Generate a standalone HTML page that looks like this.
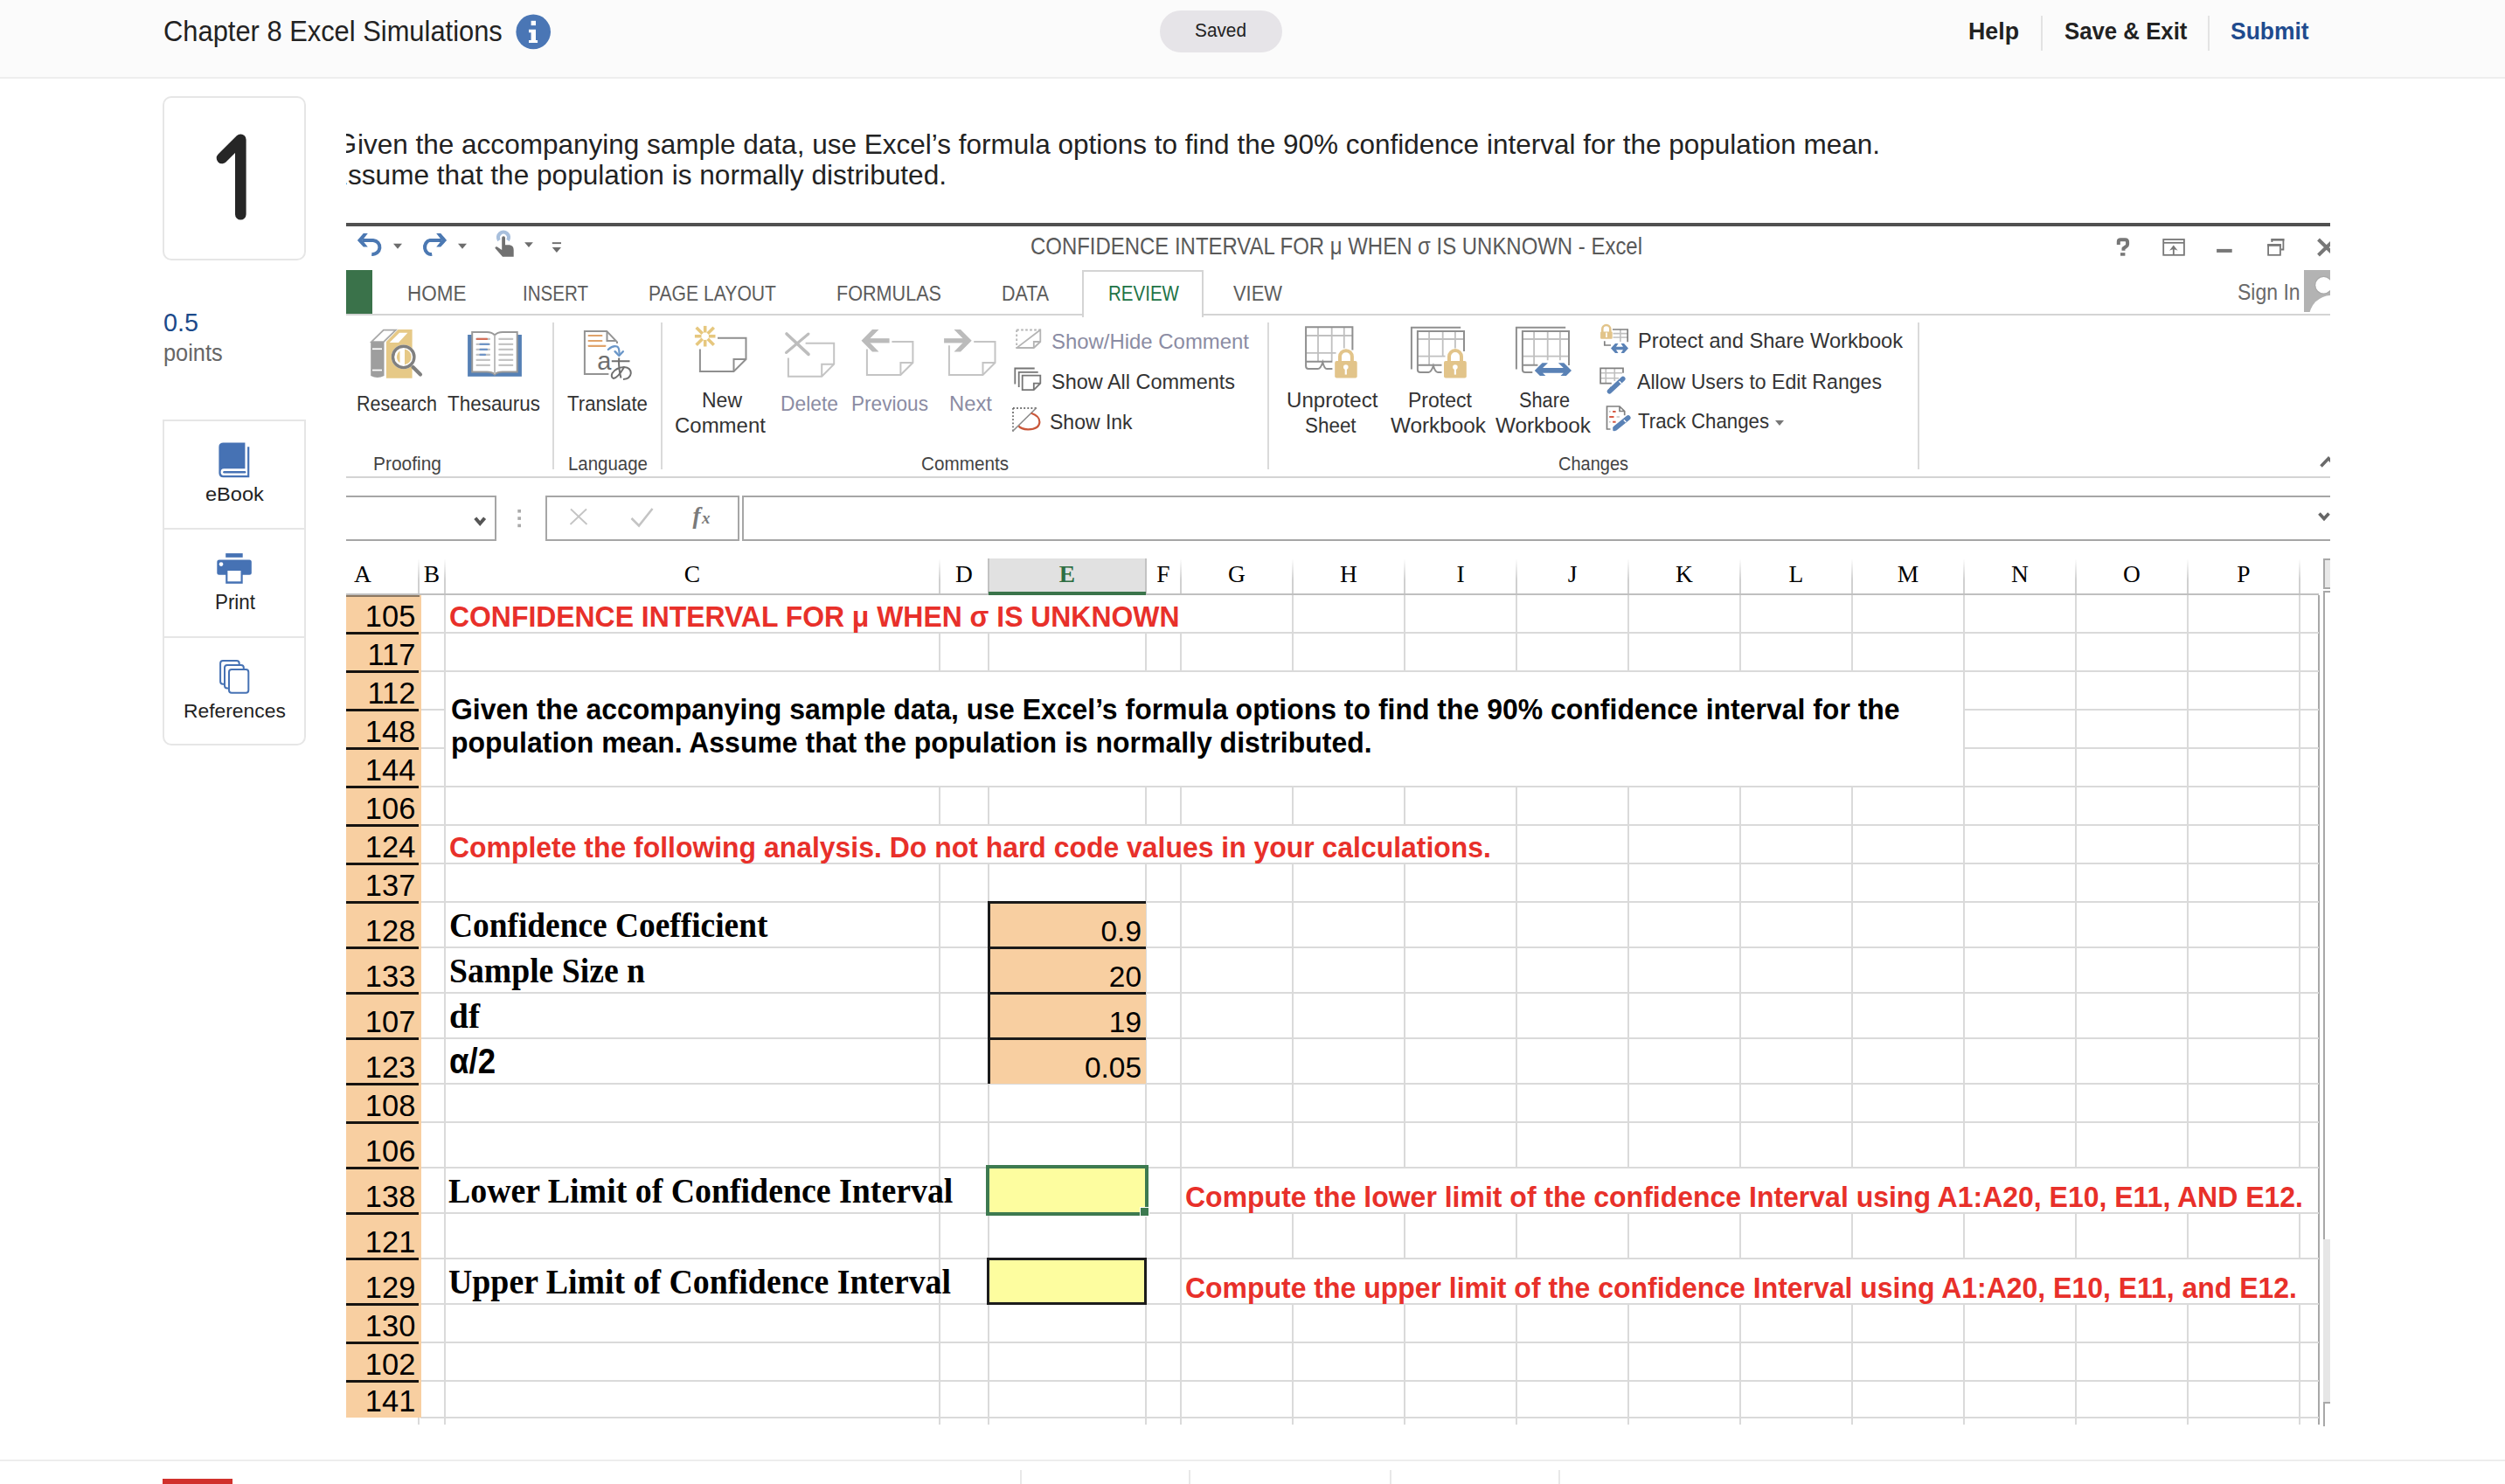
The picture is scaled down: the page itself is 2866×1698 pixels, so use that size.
<!DOCTYPE html><html><head><meta charset="utf-8"><style>
html,body{margin:0;padding:0;width:2866px;height:1698px;overflow:hidden;background:#fff;}
body{position:relative;font-family:"Liberation Sans",sans-serif;}
div,svg,span.t{position:absolute;}
span.t{white-space:nowrap;transform-origin:0 0;}
</style></head><body>
<div style="left:0px;top:0px;width:2866px;height:88px;background:#fbfbfb;"></div>
<div style="left:0px;top:88px;width:2866px;height:2px;background:#eeeeee;"></div>
<svg style="left:590px;top:16px" width="41" height="41" viewBox="590 16 41 41"><circle cx="610.2" cy="36.4" r="19.8" fill="#4a76b5"/><rect x="607.6" y="23.8" width="5.4" height="5.3" fill="#fff"/><path d="M605 33.8 H613 V46 H615.1 V48.9 H605 V46 H607.6 V37.3 H605 Z" fill="#fff"/></svg>
<div style="left:1327px;top:12px;width:140px;height:48px;border-radius:24px;background:#e6e4e8"></div>
<div style="left:2335px;top:18px;width:2px;height:40px;background:#e3e3e3;"></div>
<div style="left:2526px;top:18px;width:2px;height:40px;background:#e3e3e3;"></div>
<div style="left:186px;top:110px;width:160px;height:184px;border:2px solid #e6e6e6;border-radius:10px;background:#fff"></div>
<svg style="left:230px;top:140px" width="70" height="130" viewBox="230 140 70 130"><path d="M254 181 L275.3 159.8 L275.3 245.3" fill="none" stroke="#262626" stroke-width="12.6" stroke-linecap="round" stroke-linejoin="round"/></svg>
<div style="left:186px;top:480px;width:160px;height:369px;border:2px solid #e6e6e6;border-radius:0 0 10px 10px;background:#fff"></div>
<div style="left:188px;top:604px;width:160px;height:2px;background:#e6e6e6;"></div>
<div style="left:188px;top:728px;width:160px;height:2px;background:#e6e6e6;"></div>
<div style="left:396px;top:140px;width:1900px;height:90px;overflow:hidden"><span class="t" style="left:-12px;top:9.35px;font:400 31px/1 'Liberation Sans',sans-serif;color:#222">G</span></div>
<div style="left:396px;top:175px;width:100px;height:50px;overflow:hidden"><span class="t" style="left:-20px;top:9.55px;font:400 31px/1 'Liberation Sans',sans-serif;color:#222">A</span></div>
<div style="left:396px;top:255px;width:2270px;height:4px;background:#505050;"></div>
<div style="left:396px;top:309px;width:30px;height:50px;background:#3a724a;"></div>
<div style="left:396px;top:359px;width:2270px;height:2px;background:#d4d4d4;"></div>
<div style="left:1238px;top:309px;width:135px;height:52px;border:2px solid #d4d4d4;border-bottom:none;background:#fff"></div>
<div style="left:2636px;top:309px;width:30px;height:48px;background:#b3b3b3;"></div>
<svg style="left:2636px;top:309px" width="30" height="48"><circle cx="30" cy="23" r="11" fill="#fff" stroke="#b3b3b3" stroke-width="0"/><path d="M6 48 v-16 a12 12 0 0 1 12 -12 h12 v28z" fill="#b3b3b3"/></svg>
<svg style="left:2031px;top:481px" width="10" height="6"><path d="M0 0h10l-5 6z" fill="#777"/></svg>
<div style="left:632px;top:369px;width:2px;height:168px;background:#dadada;"></div>
<div style="left:756px;top:369px;width:2px;height:168px;background:#dadada;"></div>
<div style="left:1450px;top:369px;width:2px;height:168px;background:#dadada;"></div>
<div style="left:2194px;top:369px;width:2px;height:168px;background:#dadada;"></div>
<div style="left:396px;top:545px;width:2270px;height:2px;background:#d4d4d4;"></div>
<div style="left:396px;top:567px;width:170px;height:48px;border:2px solid #a6a6a6;border-left:none"></div>
<div style="left:624px;top:567px;width:218px;height:48px;border:2px solid #a6a6a6"></div>
<div style="left:849px;top:567px;width:1830px;height:48px;border:2px solid #a6a6a6;border-right:none"></div>
<div style="left:1131px;top:639px;width:180px;height:41px;background:#e1e1e1;"></div>
<div style="left:478px;top:639px;width:2px;height:41px;background:linear-gradient(#fff,#d0d0d0 60%)"></div>
<div style="left:508px;top:639px;width:2px;height:41px;background:linear-gradient(#fff,#d0d0d0 60%)"></div>
<div style="left:1074px;top:639px;width:2px;height:41px;background:linear-gradient(#fff,#d0d0d0 60%)"></div>
<div style="left:1130px;top:639px;width:2px;height:41px;background:linear-gradient(#fff,#d0d0d0 60%)"></div>
<div style="left:1310px;top:639px;width:2px;height:41px;background:linear-gradient(#fff,#d0d0d0 60%)"></div>
<div style="left:1350px;top:639px;width:2px;height:41px;background:linear-gradient(#fff,#d0d0d0 60%)"></div>
<div style="left:1478px;top:639px;width:2px;height:41px;background:linear-gradient(#fff,#d0d0d0 60%)"></div>
<div style="left:1606px;top:639px;width:2px;height:41px;background:linear-gradient(#fff,#d0d0d0 60%)"></div>
<div style="left:1734px;top:639px;width:2px;height:41px;background:linear-gradient(#fff,#d0d0d0 60%)"></div>
<div style="left:1862px;top:639px;width:2px;height:41px;background:linear-gradient(#fff,#d0d0d0 60%)"></div>
<div style="left:1990px;top:639px;width:2px;height:41px;background:linear-gradient(#fff,#d0d0d0 60%)"></div>
<div style="left:2118px;top:639px;width:2px;height:41px;background:linear-gradient(#fff,#d0d0d0 60%)"></div>
<div style="left:2246px;top:639px;width:2px;height:41px;background:linear-gradient(#fff,#d0d0d0 60%)"></div>
<div style="left:2374px;top:639px;width:2px;height:41px;background:linear-gradient(#fff,#d0d0d0 60%)"></div>
<div style="left:2502px;top:639px;width:2px;height:41px;background:linear-gradient(#fff,#d0d0d0 60%)"></div>
<div style="left:2630px;top:639px;width:2px;height:41px;background:linear-gradient(#fff,#d0d0d0 60%)"></div>
<div style="left:396px;top:678.6px;width:2257px;height:2.3999999999999773px;background:#c0c0c0;"></div>
<div style="left:1130px;top:639px;width:2px;height:41px;background:#c2c2c2;"></div>
<div style="left:1310px;top:639px;width:2px;height:41px;background:#c2c2c2;"></div>
<div style="left:1131px;top:677px;width:180px;height:3.5px;background:#3a744a;"></div>
<div style="left:508px;top:681px;width:2px;height:949px;background:#dadada;"></div>
<div style="left:1074px;top:724px;width:2px;height:44px;background:#dadada;"></div>
<div style="left:1074px;top:900px;width:2px;height:44px;background:#dadada;"></div>
<div style="left:1074px;top:988px;width:2px;height:642px;background:#dadada;"></div>
<div style="left:1130px;top:724px;width:2px;height:44px;background:#dadada;"></div>
<div style="left:1130px;top:900px;width:2px;height:44px;background:#dadada;"></div>
<div style="left:1130px;top:988px;width:2px;height:642px;background:#dadada;"></div>
<div style="left:1310px;top:724px;width:2px;height:44px;background:#dadada;"></div>
<div style="left:1310px;top:900px;width:2px;height:44px;background:#dadada;"></div>
<div style="left:1310px;top:988px;width:2px;height:642px;background:#dadada;"></div>
<div style="left:1350px;top:724px;width:2px;height:44px;background:#dadada;"></div>
<div style="left:1350px;top:900px;width:2px;height:44px;background:#dadada;"></div>
<div style="left:1350px;top:988px;width:2px;height:642px;background:#dadada;"></div>
<div style="left:1478px;top:681px;width:2px;height:87px;background:#dadada;"></div>
<div style="left:1478px;top:900px;width:2px;height:44px;background:#dadada;"></div>
<div style="left:1478px;top:988px;width:2px;height:348px;background:#dadada;"></div>
<div style="left:1478px;top:1388px;width:2px;height:52px;background:#dadada;"></div>
<div style="left:1478px;top:1492px;width:2px;height:138px;background:#dadada;"></div>
<div style="left:1606px;top:681px;width:2px;height:87px;background:#dadada;"></div>
<div style="left:1606px;top:900px;width:2px;height:44px;background:#dadada;"></div>
<div style="left:1606px;top:988px;width:2px;height:348px;background:#dadada;"></div>
<div style="left:1606px;top:1388px;width:2px;height:52px;background:#dadada;"></div>
<div style="left:1606px;top:1492px;width:2px;height:138px;background:#dadada;"></div>
<div style="left:1734px;top:681px;width:2px;height:87px;background:#dadada;"></div>
<div style="left:1734px;top:900px;width:2px;height:436px;background:#dadada;"></div>
<div style="left:1734px;top:1388px;width:2px;height:52px;background:#dadada;"></div>
<div style="left:1734px;top:1492px;width:2px;height:138px;background:#dadada;"></div>
<div style="left:1862px;top:681px;width:2px;height:87px;background:#dadada;"></div>
<div style="left:1862px;top:900px;width:2px;height:436px;background:#dadada;"></div>
<div style="left:1862px;top:1388px;width:2px;height:52px;background:#dadada;"></div>
<div style="left:1862px;top:1492px;width:2px;height:138px;background:#dadada;"></div>
<div style="left:1990px;top:681px;width:2px;height:87px;background:#dadada;"></div>
<div style="left:1990px;top:900px;width:2px;height:436px;background:#dadada;"></div>
<div style="left:1990px;top:1388px;width:2px;height:52px;background:#dadada;"></div>
<div style="left:1990px;top:1492px;width:2px;height:138px;background:#dadada;"></div>
<div style="left:2118px;top:681px;width:2px;height:87px;background:#dadada;"></div>
<div style="left:2118px;top:900px;width:2px;height:436px;background:#dadada;"></div>
<div style="left:2118px;top:1388px;width:2px;height:52px;background:#dadada;"></div>
<div style="left:2118px;top:1492px;width:2px;height:138px;background:#dadada;"></div>
<div style="left:2246px;top:681px;width:2px;height:655px;background:#dadada;"></div>
<div style="left:2246px;top:1388px;width:2px;height:52px;background:#dadada;"></div>
<div style="left:2246px;top:1492px;width:2px;height:138px;background:#dadada;"></div>
<div style="left:2374px;top:681px;width:2px;height:655px;background:#dadada;"></div>
<div style="left:2374px;top:1388px;width:2px;height:52px;background:#dadada;"></div>
<div style="left:2374px;top:1492px;width:2px;height:138px;background:#dadada;"></div>
<div style="left:2502px;top:681px;width:2px;height:655px;background:#dadada;"></div>
<div style="left:2502px;top:1388px;width:2px;height:52px;background:#dadada;"></div>
<div style="left:2502px;top:1492px;width:2px;height:138px;background:#dadada;"></div>
<div style="left:2630px;top:681px;width:2px;height:655px;background:#dadada;"></div>
<div style="left:2630px;top:1388px;width:2px;height:52px;background:#dadada;"></div>
<div style="left:2630px;top:1492px;width:2px;height:138px;background:#dadada;"></div>
<div style="left:2652px;top:681px;width:2px;height:949px;background:#a8a8a8;"></div>
<div style="left:478px;top:1622px;width:2px;height:8px;background:#dadada;"></div>
<div style="left:481px;top:723px;width:2172px;height:2px;background:#dadada;"></div>
<div style="left:481px;top:767px;width:2172px;height:2px;background:#dadada;"></div>
<div style="left:481px;top:811px;width:28px;height:2px;background:#dadada;"></div>
<div style="left:2247px;top:811px;width:406px;height:2px;background:#dadada;"></div>
<div style="left:481px;top:855px;width:28px;height:2px;background:#dadada;"></div>
<div style="left:2247px;top:855px;width:406px;height:2px;background:#dadada;"></div>
<div style="left:481px;top:899px;width:2172px;height:2px;background:#dadada;"></div>
<div style="left:481px;top:943px;width:2172px;height:2px;background:#dadada;"></div>
<div style="left:481px;top:987px;width:2172px;height:2px;background:#dadada;"></div>
<div style="left:481px;top:1031px;width:2172px;height:2px;background:#dadada;"></div>
<div style="left:481px;top:1083px;width:2172px;height:2px;background:#dadada;"></div>
<div style="left:481px;top:1135px;width:2172px;height:2px;background:#dadada;"></div>
<div style="left:481px;top:1187px;width:2172px;height:2px;background:#dadada;"></div>
<div style="left:481px;top:1239px;width:2172px;height:2px;background:#dadada;"></div>
<div style="left:481px;top:1283px;width:2172px;height:2px;background:#dadada;"></div>
<div style="left:481px;top:1335px;width:2172px;height:2px;background:#dadada;"></div>
<div style="left:481px;top:1387px;width:2172px;height:2px;background:#dadada;"></div>
<div style="left:481px;top:1439px;width:2172px;height:2px;background:#dadada;"></div>
<div style="left:481px;top:1491px;width:2172px;height:2px;background:#dadada;"></div>
<div style="left:481px;top:1535px;width:2172px;height:2px;background:#dadada;"></div>
<div style="left:481px;top:1579px;width:2172px;height:2px;background:#dadada;"></div>
<div style="left:481px;top:1621px;width:2172px;height:2px;background:#dadada;"></div>
<div style="left:396px;top:681px;width:86px;height:941px;background:#f8cfa1;"></div>
<div style="left:396px;top:680.8px;width:84px;height:2.2000000000000455px;background:#8c7862;"></div>
<div style="left:396px;top:722.5px;width:83px;height:3.5px;background:#161310;"></div>
<div style="left:396px;top:766.5px;width:83px;height:3.5px;background:#161310;"></div>
<div style="left:396px;top:810.5px;width:83px;height:3.5px;background:#161310;"></div>
<div style="left:396px;top:854.5px;width:83px;height:3.5px;background:#161310;"></div>
<div style="left:396px;top:898.5px;width:83px;height:3.5px;background:#161310;"></div>
<div style="left:396px;top:942.5px;width:83px;height:3.5px;background:#161310;"></div>
<div style="left:396px;top:986.5px;width:83px;height:3.5px;background:#161310;"></div>
<div style="left:396px;top:1030.5px;width:83px;height:3.5px;background:#161310;"></div>
<div style="left:396px;top:1082.5px;width:83px;height:3.5px;background:#161310;"></div>
<div style="left:396px;top:1134.5px;width:83px;height:3.5px;background:#161310;"></div>
<div style="left:396px;top:1186.5px;width:83px;height:3.5px;background:#161310;"></div>
<div style="left:396px;top:1238.5px;width:83px;height:3.5px;background:#161310;"></div>
<div style="left:396px;top:1282.5px;width:83px;height:3.5px;background:#161310;"></div>
<div style="left:396px;top:1334.5px;width:83px;height:3.5px;background:#161310;"></div>
<div style="left:396px;top:1386.5px;width:83px;height:3.5px;background:#161310;"></div>
<div style="left:396px;top:1438.5px;width:83px;height:3.5px;background:#161310;"></div>
<div style="left:396px;top:1490.5px;width:83px;height:3.5px;background:#161310;"></div>
<div style="left:396px;top:1534.5px;width:83px;height:3.5px;background:#161310;"></div>
<div style="left:396px;top:1578.5px;width:83px;height:3.5px;background:#161310;"></div>
<div style="left:1131px;top:1032px;width:180px;height:208px;background:#f8cfa1;"></div>
<div style="left:1130px;top:1031px;width:3px;height:209px;background:#1a1a1a;"></div>
<div style="left:1130px;top:1031px;width:181px;height:3px;background:#1a1a1a;"></div>
<div style="left:1130px;top:1083px;width:181px;height:3px;background:#1a1a1a;"></div>
<div style="left:1130px;top:1135px;width:181px;height:3px;background:#1a1a1a;"></div>
<div style="left:1130px;top:1187px;width:181px;height:3px;background:#1a1a1a;"></div>
<div style="left:1128px;top:1333px;width:178px;height:50px;border:4px solid #3d7a50;background:#fdfd9f"></div>
<div style="left:1304px;top:1381px;width:9px;height:9px;background:#3d7a50;border:1px solid #fff"></div>
<div style="left:1129px;top:1439px;width:177px;height:48px;border:3px solid #1c1c1c;background:#fdfd9f"></div>
<div style="left:2658px;top:639px;width:10px;height:31px;border:2px solid #a8a8a8;border-right:none;background:#e8e8e8"></div>
<div style="left:2658px;top:676px;width:10px;height:740px;border:2px solid #a8a8a8;border-right:none;background:#fff"></div>
<div style="left:2658px;top:1418px;width:8px;height:186px;background:#e6e6e6;"></div>
<div style="left:2658px;top:1604px;width:10px;height:26px;border:2px solid #a8a8a8;border-right:none;border-bottom:none;background:#fff"></div>
<div style="left:2666px;top:250px;width:200px;height:1410px;background:#fff;"></div>
<div style="left:0px;top:1670px;width:2866px;height:2px;background:#ededed;"></div>
<div style="left:186px;top:1692px;width:80px;height:6px;background:#d1312c;"></div>
<div style="left:1167px;top:1682px;width:2px;height:16px;background:#e8e8e8;"></div>
<div style="left:1360px;top:1682px;width:2px;height:16px;background:#e8e8e8;"></div>
<div style="left:1590px;top:1682px;width:2px;height:16px;background:#e8e8e8;"></div>
<div style="left:1783px;top:1682px;width:2px;height:16px;background:#e8e8e8;"></div>
<svg style="left:245px;top:500px;" width="45" height="50" viewBox="245 500 45 50"><path d="M250.4 511.4 Q250.4 506.4 255.4 506.4 H280.4 V536.2 H256 Q252.6 536.2 252.6 540.1 Q252.6 544 256 544 H283.1 V511.3 H285.3 V546.2 H255.4 Q250.4 546.2 250.4 541.2 Z" fill="#4672b4"/><path d="M256.5 540.3 H280" stroke="#4672b4" stroke-width="2.6" stroke-linecap="round"/></svg>
<svg style="left:245px;top:628px;" width="48" height="45" viewBox="245 628 48 45"><rect x="258.2" y="633.1" width="19.5" height="4.7" fill="#4672b4"/><rect x="248.3" y="640.5" width="39.5" height="17.2" rx="2.5" fill="#4672b4"/><circle cx="253" cy="645.6" r="2.3" fill="#fff"/><rect x="258.2" y="651" width="19.5" height="16.8" fill="#4672b4"/><rect x="260.4" y="653" width="15.1" height="12.3" fill="#fff"/></svg>
<svg style="left:245px;top:750px;" width="45" height="48" viewBox="245 750 45 48"><rect x="252.1" y="755.9" width="21.599999999999994" height="26.800000000000068" rx="3" fill="#fff" stroke="#4672b4" stroke-width="2"/><rect x="257" y="761" width="21.80000000000001" height="26.600000000000023" rx="3" fill="#fff" stroke="#4672b4" stroke-width="2"/><rect x="262" y="766" width="22.30000000000001" height="26.799999999999955" rx="3" fill="#fff" stroke="#4672b4" stroke-width="2"/></svg>
<svg style="left:400px;top:258px;" width="260" height="42" viewBox="400 258 260 42"><path d="M415 274.9 H427 A8 8 0 1 1 425.3 290.8" fill="none" stroke="#4b78b2" stroke-width="4"/><path d="M408.9 274.9 L415.8 266.9 H420.8 L414.6 274.9 L420.8 282.6 H415.8 Z" fill="#4b78b2"/><path d="M450 278.7 h10 l-5 6z" fill="#6d6d6d"/><path d="M505 274.9 H492 A7 8 0 0 0 494.2 290.9" fill="none" stroke="#4b78b2" stroke-width="4"/><path d="M511.1 274.9 L504.2 266.9 H499.2 L505.4 274.9 L499.2 282.6 H504.2 Z" fill="#4b78b2"/><path d="M524 278.7 h10 l-5 6z" fill="#6d6d6d"/><path d="M571 275 A6 6 0 1 1 581 275" fill="none" stroke="#a8bfdc" stroke-width="4.2"/><path d="M574.2 272 Q574.2 270.2 576.1 270.2 Q578 270.2 578 272 V280.2 H583 Q587.7 281 587.7 286 V293.7 H575 L566.5 284 Q566 282 568.5 282.2 L574.2 286 Z" fill="#717171"/><path d="M600.1 277.2 h9.8 l-4.9 5.8z" fill="#6d6d6d"/><rect x="631.8" y="277.2" width="10.2" height="1.9" fill="#6d6d6d"/><path d="M631.8 283 h10.2 l-5.1 6z" fill="#6d6d6d"/></svg>
<svg style="left:2415px;top:268px;" width="251" height="30" viewBox="2415 268 251 30"><path d="M2423.8 280 v-3.5 q0 -2.2 2.5 -2.2 h5 q2.8 0 2.8 2.8 v2.4 q0 1.8 -1.8 2.8 l-2.8 1.8 v2.6" fill="none" stroke="#777" stroke-width="4" stroke-linejoin="round"/><rect x="2426" y="289.2" width="5.4" height="3.5" fill="#777"/><rect x="2475.2" y="274" width="23.7" height="17.8" fill="none" stroke="#777" stroke-width="1.8"/><path d="M2475 277.8 H2499" stroke="#777" stroke-width="1.8"/><path d="M2486.8 292 V283" fill="none" stroke="#777" stroke-width="1.8"/><path d="M2482 286.8 L2486.8 280.5 L2491.6 286.8 Q2486.8 283.5 2482 286.8 Z" fill="#777"/><rect x="2536.1" y="284.9" width="17.6" height="4" fill="#777"/><path d="M2599.4 277 V274.2 H2612.4 V285.5 H2609.8" fill="none" stroke="#777" stroke-width="1.8"/><rect x="2598.4" y="273" width="15" height="2.6" fill="#777"/><rect x="2595.1" y="280.1" width="13.8" height="11.7" fill="none" stroke="#777" stroke-width="1.8"/><rect x="2594.2" y="279.2" width="15.6" height="2.6" fill="#777"/><path d="M2652.5 274 L2671 292 M2652.5 292 L2671 274" stroke="#777" stroke-width="4"/></svg>
<svg style="left:2636px;top:309px;" width="30" height="48" viewBox="2636 309 30 48"><rect x="2636" y="309" width="30" height="48" fill="#b3b3b3"/><circle cx="2658.5" cy="326.3" r="10.5" fill="#a9a9a9"/><circle cx="2658.5" cy="326.3" r="9.2" fill="#fff"/><circle cx="2667" cy="363" r="25" fill="#fff"/></svg>
<svg style="left:420px;top:372px;" width="66" height="64" viewBox="420 372 66 64"><path d="M425 391.2 L438.8 377.6 H452.8 L439 391.2 Z" fill="#fff" stroke="#a8a8a8" stroke-width="1.8"/><path d="M424.2 391.2 H439.5 V430 Q431.8 434 424.2 430 Z" fill="#9e9e9e"/><rect x="426" y="398.4" width="11" height="1.7" fill="#fff"/><rect x="426" y="422.7" width="11" height="1.7" fill="#fff"/><path d="M441.9 391 L455.5 377 H471.6 V432.7 H441.9 Z" fill="#e6c987"/><path d="M445.7 392 L457 380.8 H466.4 L456 392 Z" fill="#fff"/><path d="M472.5 420 L481 428.6" stroke="#7f7f7f" stroke-width="4.2" stroke-linecap="round"/><circle cx="461.7" cy="408.4" r="12.4" fill="#fff" stroke="#fff" stroke-width="3"/><circle cx="461.7" cy="408.4" r="12.2" fill="#fff" stroke="#808080" stroke-width="3.4"/><path d="M463 399.5 A9 9 0 0 1 463 417.3 Z" fill="#e6c987"/><path d="M457.5 401.5 A8.5 8.5 0 0 0 457.5 415.3 Z" fill="#e6c987"/></svg>
<svg style="left:530px;top:375px;" width="70" height="60" viewBox="530 375 70 60"><rect x="535.1" y="383" width="61.8" height="47.8" fill="#5580b5"/><path d="M540.2 380 H557 Q563 380 566 383.5 Q569 380 575 380 H591.7 V425.6 H575 Q569 425.6 566 428.5 Q563 425.6 557 425.6 H540.2 Z" fill="#fff" stroke="#999" stroke-width="2"/><path d="M566 383.5 V428" stroke="#bdbdbd" stroke-width="2"/><path d="M545.5 387.9 H560 M571.3 387.9 H586.3" stroke="#c4c4c4" stroke-width="2.1" stroke-linecap="round"/><path d="M545.5 393.9 H560 M571.3 393.9 H586.3" stroke="#c4c4c4" stroke-width="2.1" stroke-linecap="round"/><path d="M545.5 399.9 H560 M571.3 399.9 H586.3" stroke="#c4c4c4" stroke-width="2.1" stroke-linecap="round"/><path d="M545.5 405.9 H560 M571.3 405.9 H586.3" stroke="#c4c4c4" stroke-width="2.1" stroke-linecap="round"/><path d="M545.5 411.9 H560 M571.3 411.9 H586.3" stroke="#c4c4c4" stroke-width="2.1" stroke-linecap="round"/><path d="M545.5 417.9 H560 M571.3 417.9 H586.3" stroke="#c4c4c4" stroke-width="2.1" stroke-linecap="round"/><path d="M545.6 387.9 H557" stroke="#d4705a" stroke-width="2.1" stroke-linecap="round"/><path d="M549.4 393.9 H559" stroke="#6f94c6" stroke-width="2.1" stroke-linecap="round"/><path d="M549.4 399.9 H557" stroke="#6f94c6" stroke-width="2.1" stroke-linecap="round"/><path d="M549.4 405.9 H555" stroke="#6f94c6" stroke-width="2.1" stroke-linecap="round"/></svg>
<svg style="left:660px;top:372px;" width="70" height="66" viewBox="660 372 70 66"><path d="M696.4 427.9 H668.9 V378.9 H694.2 L706 391.3 V393" fill="none" stroke="#939393" stroke-width="2"/><path d="M694.5 379 V390 H704" fill="none" stroke="#939393" stroke-width="2"/><path d="M673.6 384 H688.4 M673.6 390 H688.4 M673.6 395.8 H692.4" stroke="#e0a36b" stroke-width="2.2" stroke-linecap="round"/><path d="M695.8 400 Q701 395 706 396.5 Q708.5 397.5 708.5 404" fill="none" stroke="#6a96c8" stroke-width="2.2" stroke-linecap="round"/><path d="M703.6 402.2 L708.3 407 L712.8 402.2" fill="none" stroke="#6a96c8" stroke-width="2.4" stroke-linecap="round" stroke-linejoin="round"/><text x="683.3" y="423.3" font-family="Liberation Sans" font-size="29" fill="#6e6e6e">a</text><path d="M699.8 413.3 H720.5 M708.2 409.5 Q707.5 422 710.5 432.5 M713.5 421 Q707 432 702 433 Q698.5 431.5 700.5 427 Q705 420.5 714 420 Q721.6 420.5 721.8 427 Q721.2 433.5 713 434" fill="none" stroke="#707070" stroke-width="2"/></svg>
<svg style="left:790px;top:370px;" width="70" height="62" viewBox="790 370 70 62"><path d="M810.90 384.70 L818.50 384.70" stroke="#e6c77e" stroke-width="3.6"/><path d="M809.67 387.67 L816.74 394.74" stroke="#e6c77e" stroke-width="3.6"/><path d="M806.70 388.90 L806.70 396.50" stroke="#e6c77e" stroke-width="3.6"/><path d="M803.73 387.67 L796.66 394.74" stroke="#e6c77e" stroke-width="3.6"/><path d="M802.50 384.70 L794.90 384.70" stroke="#e6c77e" stroke-width="3.6"/><path d="M803.73 381.73 L796.66 374.66" stroke="#e6c77e" stroke-width="3.6"/><path d="M806.70 380.50 L806.70 372.90" stroke="#e6c77e" stroke-width="3.6"/><path d="M809.67 381.73 L816.74 374.66" stroke="#e6c77e" stroke-width="3.6"/><path d="M821 386.7 H853.5 V411 L839.5 425 H800.9 V399.4" fill="none" stroke="#8f8f8f" stroke-width="2"/><path d="M839.5 425 V411 H853.5" fill="none" stroke="#8f8f8f" stroke-width="2"/></svg>
<svg style="left:893px;top:375px;" width="67" height="60" viewBox="893 375 67 60"><path d="M900 382 L925 405.4" stroke="#bdbdbd" stroke-width="3.6" stroke-linecap="round"/><path d="M899.5 403.5 L925 382" stroke="#bdbdbd" stroke-width="3" stroke-linecap="round"/><path d="M921.6 392.8 H954.2 V416.7 L940.2 430.7 H901.9 V409.5" fill="none" stroke="#c4c4c4" stroke-width="2"/><path d="M940.2 430.7 V416.7 H954.2" fill="none" stroke="#c4c4c4" stroke-width="2"/></svg>
<svg style="left:983px;top:372px;" width="67" height="62" viewBox="983 372 67 62"><path d="M990 389.8 H1017.6" stroke="#bbb" stroke-width="5.3"/><path d="M1005.5 377.1 H998 L985.5 389.8 L998 402.4 H1005.5 L993 389.8 Z" fill="#bbb"/><path d="M1020.4 391 H1044.4 V415 L1030.4 429 H991.9 V399.4" fill="none" stroke="#c4c4c4" stroke-width="2"/><path d="M1030.4 429 V415 H1044.4" fill="none" stroke="#c4c4c4" stroke-width="2"/></svg>
<svg style="left:1076px;top:372px;" width="68" height="62" viewBox="1076 372 68 62"><path d="M1080.1 389.8 H1105" stroke="#bbb" stroke-width="5.3"/><path d="M1091.5 377.1 H1099 L1111.7 389.8 L1099 402.4 H1091.5 L1104 389.8 Z" fill="#bbb"/><path d="M1114.2 391 H1138.5 V415 L1124.5 429 H1085.9 V395.3" fill="none" stroke="#c4c4c4" stroke-width="2"/><path d="M1124.5 429 V415 H1138.5" fill="none" stroke="#c4c4c4" stroke-width="2"/></svg>
<svg style="left:1158px;top:372px;" width="38" height="32" viewBox="1158 372 38 32"><path d="M1163.2 377.5 H1190.3" stroke="#b4b4b4" stroke-width="1.8" stroke-dasharray="2.6 2.4"/><path d="M1163.2 377.5 V398" stroke="#b4b4b4" stroke-width="1.8" stroke-dasharray="2.6 2.4"/><path d="M1190.3 376.6 V391 L1182.8 398 H1162.3 M1182.8 398 V391 H1190.3 M1162.8 398.4 L1190.8 377" fill="none" stroke="#b4b4b4" stroke-width="1.8"/></svg>
<svg style="left:1156px;top:416px;" width="40" height="36" viewBox="1156 416 40 36"><path d="M1161.3 439.6 V421.5 H1183.7 M1165.7 443.1 V425.8 H1187.7" fill="none" stroke="#767676" stroke-width="1.8"/><path d="M1169.7 429.6 H1190.3 V438.7 L1182.8 446.2 H1169.7 Z M1182.8 446.2 V438.7 H1190.3" fill="none" stroke="#767676" stroke-width="1.8"/></svg>
<svg style="left:1154px;top:462px;" width="40" height="36" viewBox="1154 462 40 36"><path d="M1159 467 H1185.5" stroke="#707070" stroke-width="1.8" stroke-dasharray="1.8 2.3"/><path d="M1159 467 V493.5" stroke="#707070" stroke-width="1.8" stroke-dasharray="1.8 2.3"/><path d="M1158.5 493.5 L1186 466.5" stroke="#8a8a8a" stroke-width="1.6"/><path d="M1179.8 472.8 Q1189.5 476 1189.4 483 Q1188.8 491.5 1176 491.3 Q1168 491 1165.5 487.5" fill="none" stroke="#c9573a" stroke-width="2.2"/></svg>
<svg style="left:1488px;top:368px;" width="70" height="70" viewBox="1488 368 70 70"><path d="M1508 375 V413 M1523.7 375 V413 M1537.8 375 V398.4 M1494 384 H1547 M1494 403.9 H1528.5" stroke="#c0c0c0" stroke-width="1.8"/><path d="M1547.4 400.4 V374.3 H1494.1 V419 Q1494.1 422.1 1497 422.1 H1507.7 Q1511 422.1 1513.3 414.5 Q1515.3 422.1 1518 422.1 H1524.4 M1494.1 413.8 H1524.4" fill="none" stroke="#8f8f8f" stroke-width="2"/><path d="M1533 414 V408.1 A6.9500000000000455 6.9500000000000455 0 0 1 1546.9 408.1 V414" fill="none" stroke="#e2c48a" stroke-width="4"/><rect x="1527.2" y="413" width="25.5" height="19.5" rx="2" fill="#e2c48a"/><circle cx="1539.8" cy="420.1" r="2.8" fill="#fff"/><rect x="1538.7" y="420.1" width="2.2" height="8.5" fill="#fff"/></svg>
<svg style="left:1609px;top:368px;" width="72" height="70" viewBox="1609 368 72 70"><path d="M1614.9 422.4 V374.8 H1671.2" fill="none" stroke="#8f8f8f" stroke-width="2"/><path d="M1635.1 379 V417 M1650.7 379 V407.7 M1664.9 379 V398.4 M1621 388 H1674 M1621 407.7 H1653.5" stroke="#c0c0c0" stroke-width="1.8"/><path d="M1675 401.9 V378.9 H1621.9 V423 Q1621.9 425.9 1625 425.9 H1634.5 Q1637.5 425.9 1639.9 418.5 Q1642 425.9 1645 425.9 H1649.5 M1621.9 417.8 H1649.5" fill="none" stroke="#8f8f8f" stroke-width="2"/><path d="M1658 414 V408.1 A7.0 7.0 0 0 1 1672 408.1 V414" fill="none" stroke="#e2c48a" stroke-width="4"/><rect x="1652" y="413" width="25.799999999999955" height="19.5" rx="2" fill="#e2c48a"/><circle cx="1664.9" cy="420.1" r="2.8" fill="#fff"/><rect x="1663.8000000000002" y="420.1" width="2.2" height="8.5" fill="#fff"/></svg>
<svg style="left:1729px;top:368px;" width="72" height="62" viewBox="1729 368 72 62"><path d="M1734.9 422.4 V374.8 H1791.2" fill="none" stroke="#8f8f8f" stroke-width="2"/><path d="M1755.1 379 V417 M1770.7 379 V412.2 M1784.9 379 V412.2 M1741 388 H1794 M1741 407.7 H1794" stroke="#c0c0c0" stroke-width="1.8"/><path d="M1795 418 V378.9 H1741.9 V423 Q1741.9 425.9 1745 425.9 H1753.3 M1741.9 417.8 H1759.4" fill="none" stroke="#8f8f8f" stroke-width="2"/><path d="M1755.8 423.9 L1764.5 415.2 H1771 L1765 421 H1788.8 L1782.8 415.2 H1789.3 L1798 423.9 L1789.3 432.6 H1782.8 L1788.8 426.8 H1765 L1771 432.6 H1764.5 Z" fill="#5a82b6"/></svg>
<svg style="left:1828px;top:370px;" width="38" height="36" viewBox="1828 370 38 36"><path d="M1845.5 381.6 H1862 M1845.5 386 H1862 M1853.9 377 V391" stroke="#c0c0c0" stroke-width="1.6"/><path d="M1845 377 H1862.2 V391.2 M1835.8 390.3 V395 H1843" fill="none" stroke="#808080" stroke-width="1.7"/><path d="M1833.3 380 V376.5 A4.5 4.5 0 0 1 1842.3 376.5 V380" fill="none" stroke="#e2c48a" stroke-width="2.6"/><rect x="1831.1" y="379.4" width="13.6" height="8.3" rx="1" fill="#e2c48a"/><rect x="1837.2" y="380.5" width="1.6" height="5.5" fill="#fff"/><path d="M1843 398.5 L1848 393 H1851.5 L1849 396.7 H1857 L1854.5 393 H1858 L1863 398.5 L1858 404 H1854.5 L1857 400.3 H1849 L1851.5 404 H1848 Z" fill="#5a82b6"/></svg>
<svg style="left:1828px;top:417px;" width="36" height="36" viewBox="1828 417 36 36"><path d="M1831 426.7 H1856 M1831 432.8 H1852 M1837.3 421 V439 M1847.3 421 V436" stroke="#c0c0c0" stroke-width="1.6"/><path d="M1857 426.7 V421.3 H1831.1 V438.6 H1843.8" fill="none" stroke="#808080" stroke-width="1.7"/><path d="M1841.5 447.8 L1856.8 433.5" stroke="#5a82b6" stroke-width="5.5" stroke-linecap="round"/><path d="M1840.3 449.5 L1843.5 443" stroke="#5a82b6" stroke-width="2.5"/><path d="M1852.5 436.2 L1855 438.8" stroke="#fff" stroke-width="1.4"/></svg>
<svg style="left:1832px;top:460px;" width="36" height="36" viewBox="1832 460 36 36"><path d="M1842.5 491 H1838.5 V465 H1853 L1858.7 470.5 V475.3 M1853 465 V470.5 H1858.7" fill="none" stroke="#808080" stroke-width="1.7"/><path d="M1845.1 470.9 H1848.6 M1841.2 477 H1846.5 M1845.1 482.7 H1848.6" stroke="#d65a45" stroke-width="2"/><path d="M1841 470.9 H1842.6 M1849.6 477 H1853 M1841 482.7 H1842.6" stroke="#c4c4c4" stroke-width="1.6"/><path d="M1848 490 L1862.8 478" stroke="#5a82b6" stroke-width="5.5" stroke-linecap="round"/><path d="M1846 492.8 L1849.5 487" stroke="#5a82b6" stroke-width="2.5"/><path d="M1857.8 480.5 L1860.3 483" stroke="#fff" stroke-width="1.4"/></svg>
<svg style="left:2650px;top:518px;" width="16" height="20" viewBox="2650 518 16 20"><path d="M2655.5 533.5 L2664 524.5 L2672 533" fill="none" stroke="#6a6a6a" stroke-width="3.6"/></svg>
<svg style="left:538px;top:586px;" width="22" height="20" viewBox="538 586 22 20"><path d="M543.8 592.8 L549.2 599 L554.6 592.8" fill="none" stroke="#555" stroke-width="4"/></svg>
<svg style="left:590px;top:580px;" width="8" height="26" viewBox="590 580 8 26"><rect x="592.3" y="583" width="3.7" height="3.6" fill="#aaa"/><rect x="592.3" y="591.3" width="3.7" height="3.6" fill="#aaa"/><rect x="592.3" y="599.6" width="3.7" height="3.6" fill="#aaa"/></svg>
<svg style="left:648px;top:578px;" width="28" height="26" viewBox="648 578 28 26"><path d="M652.5 600 L671 582.5 M653 582.5 L671.5 600" stroke="#c4c4c4" stroke-width="1.8"/></svg>
<svg style="left:718px;top:578px;" width="34" height="28" viewBox="718 578 34 28"><path d="M722.5 593 L731 601.5 L746.5 582" fill="none" stroke="#c4c4c4" stroke-width="2.6"/></svg>
<svg style="left:790px;top:574px;" width="32" height="32" viewBox="790 574 32 32"><text x="792.5" y="598.5" font-family="Liberation Serif" font-style="italic" font-weight="700" font-size="27" fill="#7a7a7a">f</text><text x="803" y="598.5" font-family="Liberation Serif" font-style="italic" font-weight="700" font-size="19" fill="#7a7a7a">x</text></svg>
<svg style="left:2648px;top:580px;" width="18" height="22" viewBox="2648 580 18 22"><path d="M2653.5 587.5 L2659 593.5 L2664.5 587.5" fill="none" stroke="#666" stroke-width="3.6"/></svg>
<span class="t" style="left:187.0px;top:18.8px;font:400 32.99px/1 'Liberation Sans', sans-serif;color:#222;transform:scaleX(0.9359);">Chapter 8 Excel Simulations</span>
<span class="t" style="left:1367.0px;top:23.3px;font:400 22.67px/1 'Liberation Sans', sans-serif;color:#222;transform:scaleX(0.9183);">Saved</span>
<span class="t" style="left:2251.6px;top:21.5px;font:700 27.62px/1 'Liberation Sans', sans-serif;color:#222;transform:scaleX(0.9692);">Help</span>
<span class="t" style="left:2361.6px;top:21.5px;font:700 27.62px/1 'Liberation Sans', sans-serif;color:#222;transform:scaleX(0.9335);">Save &amp; Exit</span>
<span class="t" style="left:2552.0px;top:21.5px;font:700 27.62px/1 'Liberation Sans', sans-serif;color:#1f4b8e;transform:scaleX(0.9576);">Submit</span>
<span class="t" style="left:187.0px;top:353.5px;font:400 29.94px/1 'Liberation Sans', sans-serif;color:#1c4a8a;transform:scaleX(0.9610);">0.5</span>
<span class="t" style="left:187.0px;top:388.9px;font:400 28.34px/1 'Liberation Sans', sans-serif;color:#666;transform:scaleX(0.8943);">points</span>
<span class="t" style="left:234.6px;top:553.9px;font:400 22.67px/1 'Liberation Sans', sans-serif;color:#222;transform:scaleX(1.0397);">eBook</span>
<span class="t" style="left:245.6px;top:678.2px;font:400 23.26px/1 'Liberation Sans', sans-serif;color:#222;transform:scaleX(0.9621);">Print</span>
<span class="t" style="left:209.6px;top:801.9px;font:400 22.67px/1 'Liberation Sans', sans-serif;color:#222;transform:scaleX(1.0081);">References</span>
<span class="t" style="left:409.0px;top:148.5px;font:400 31.98px/1 'Liberation Sans', sans-serif;color:#222;transform:scaleX(0.9855);">iven the accompanying sample data, use Excel’s formula options to find the 90% confidence interval for the population mean.</span>
<span class="t" style="left:398.0px;top:183.7px;font:400 31.98px/1 'Liberation Sans', sans-serif;color:#222;transform:scaleX(0.9884);">ssume that the population is normally distributed.</span>
<span class="t" style="left:1179.0px;top:268.7px;font:400 26.74px/1 'Liberation Sans', sans-serif;color:#595959;transform:scaleX(0.8957);">CONFIDENCE INTERVAL FOR μ WHEN σ IS UNKNOWN - Excel</span>
<span class="t" style="left:465.6px;top:324.0px;font:400 24.71px/1 'Liberation Sans', sans-serif;color:#5c5c5c;transform:scaleX(0.9093);">HOME</span>
<span class="t" style="left:598.0px;top:324.0px;font:400 24.71px/1 'Liberation Sans', sans-serif;color:#5c5c5c;transform:scaleX(0.8320);">INSERT</span>
<span class="t" style="left:742.0px;top:324.0px;font:400 24.71px/1 'Liberation Sans', sans-serif;color:#5c5c5c;transform:scaleX(0.8554);">PAGE LAYOUT</span>
<span class="t" style="left:957.0px;top:324.0px;font:400 24.71px/1 'Liberation Sans', sans-serif;color:#5c5c5c;transform:scaleX(0.8742);">FORMULAS</span>
<span class="t" style="left:1146.0px;top:324.0px;font:400 24.71px/1 'Liberation Sans', sans-serif;color:#5c5c5c;transform:scaleX(0.8679);">DATA</span>
<span class="t" style="left:1411.0px;top:324.0px;font:400 24.71px/1 'Liberation Sans', sans-serif;color:#5c5c5c;transform:scaleX(0.8869);">VIEW</span>
<span class="t" style="left:1268.0px;top:324.0px;font:400 24.71px/1 'Liberation Sans', sans-serif;color:#217346;transform:scaleX(0.8312);">REVIEW</span>
<span class="t" style="left:2560.0px;top:321.5px;font:400 25.29px/1 'Liberation Sans', sans-serif;color:#6a6a6a;transform:scaleX(0.9096);">Sign In</span>
<span class="t" style="left:408.0px;top:450.0px;font:400 24.71px/1 'Liberation Sans', sans-serif;color:#333;transform:scaleX(0.8701);">Research</span>
<span class="t" style="left:512.0px;top:450.0px;font:400 24.71px/1 'Liberation Sans', sans-serif;color:#333;transform:scaleX(0.9082);">Thesaurus</span>
<span class="t" style="left:649.0px;top:450.0px;font:400 24.71px/1 'Liberation Sans', sans-serif;color:#333;transform:scaleX(0.9014);">Translate</span>
<span class="t" style="left:803.0px;top:445.6px;font:400 23.98px/1 'Liberation Sans', sans-serif;color:#333;transform:scaleX(0.9593);">New</span>
<span class="t" style="left:772.0px;top:474.6px;font:400 23.98px/1 'Liberation Sans', sans-serif;color:#333;">Comment</span>
<span class="t" style="left:893.0px;top:450.0px;font:400 24.71px/1 'Liberation Sans', sans-serif;color:#8b8ca3;transform:scaleX(0.9241);">Delete</span>
<span class="t" style="left:974.0px;top:450.0px;font:400 24.71px/1 'Liberation Sans', sans-serif;color:#8b8ca3;transform:scaleX(0.9155);">Previous</span>
<span class="t" style="left:1086.0px;top:450.0px;font:400 24.71px/1 'Liberation Sans', sans-serif;color:#8b8ca3;transform:scaleX(0.9646);">Next</span>
<span class="t" style="left:1203.0px;top:379.0px;font:400 24.71px/1 'Liberation Sans', sans-serif;color:#8b8ca3;transform:scaleX(0.9683);">Show/Hide Comment</span>
<span class="t" style="left:1203.0px;top:424.6px;font:400 24.71px/1 'Liberation Sans', sans-serif;color:#333;transform:scaleX(0.9500);">Show All Comments</span>
<span class="t" style="left:1201.0px;top:470.6px;font:400 24.71px/1 'Liberation Sans', sans-serif;color:#333;transform:scaleX(0.9309);">Show Ink</span>
<span class="t" style="left:1472.0px;top:445.6px;font:400 23.98px/1 'Liberation Sans', sans-serif;color:#333;transform:scaleX(1.0046);">Unprotect</span>
<span class="t" style="left:1493.0px;top:474.6px;font:400 23.98px/1 'Liberation Sans', sans-serif;color:#333;transform:scaleX(0.9355);">Sheet</span>
<span class="t" style="left:1611.0px;top:445.6px;font:400 23.98px/1 'Liberation Sans', sans-serif;color:#333;transform:scaleX(0.9613);">Protect</span>
<span class="t" style="left:1591.0px;top:474.6px;font:400 23.98px/1 'Liberation Sans', sans-serif;color:#333;transform:scaleX(1.0142);">Workbook</span>
<span class="t" style="left:1738.0px;top:445.6px;font:400 23.98px/1 'Liberation Sans', sans-serif;color:#333;transform:scaleX(0.9067);">Share</span>
<span class="t" style="left:1711.0px;top:474.6px;font:400 23.98px/1 'Liberation Sans', sans-serif;color:#333;transform:scaleX(1.0142);">Workbook</span>
<span class="t" style="left:1874.0px;top:378.0px;font:400 24.71px/1 'Liberation Sans', sans-serif;color:#333;transform:scaleX(0.9566);">Protect and Share Workbook</span>
<span class="t" style="left:1873.0px;top:424.6px;font:400 24.71px/1 'Liberation Sans', sans-serif;color:#333;transform:scaleX(0.9355);">Allow Users to Edit Ranges</span>
<span class="t" style="left:1874.0px;top:470.0px;font:400 24.71px/1 'Liberation Sans', sans-serif;color:#333;transform:scaleX(0.9004);">Track Changes</span>
<span class="t" style="left:427.0px;top:519.5px;font:400 21.80px/1 'Liberation Sans', sans-serif;color:#444;transform:scaleX(0.9607);">Proofing</span>
<span class="t" style="left:650.0px;top:519.5px;font:400 21.80px/1 'Liberation Sans', sans-serif;color:#444;transform:scaleX(0.9383);">Language</span>
<span class="t" style="left:1054.0px;top:519.5px;font:400 21.80px/1 'Liberation Sans', sans-serif;color:#444;transform:scaleX(0.9489);">Comments</span>
<span class="t" style="left:1783.0px;top:519.5px;font:400 21.80px/1 'Liberation Sans', sans-serif;color:#444;transform:scaleX(0.9167);">Changes</span>
<span class="t" style="left:415.0px;top:644.2px;font:400 27.48px/1 'Liberation Serif', serif;color:#000;transform:translateX(-50%)">A</span>
<span class="t" style="left:494.0px;top:644.2px;font:400 27.48px/1 'Liberation Serif', serif;color:#000;transform:translateX(-50%)">B</span>
<span class="t" style="left:792.0px;top:644.2px;font:400 27.48px/1 'Liberation Serif', serif;color:#000;transform:translateX(-50%)">C</span>
<span class="t" style="left:1103.0px;top:644.2px;font:400 27.48px/1 'Liberation Serif', serif;color:#000;transform:translateX(-50%)">D</span>
<span class="t" style="left:1221.0px;top:644.2px;font:700 27.48px/1 'Liberation Serif', serif;color:#2e6e42;transform:translateX(-50%)">E</span>
<span class="t" style="left:1331.0px;top:644.2px;font:400 27.48px/1 'Liberation Serif', serif;color:#000;transform:translateX(-50%)">F</span>
<span class="t" style="left:1415.0px;top:644.2px;font:400 27.48px/1 'Liberation Serif', serif;color:#000;transform:translateX(-50%)">G</span>
<span class="t" style="left:1543.0px;top:644.2px;font:400 27.48px/1 'Liberation Serif', serif;color:#000;transform:translateX(-50%)">H</span>
<span class="t" style="left:1671.0px;top:644.2px;font:400 27.48px/1 'Liberation Serif', serif;color:#000;transform:translateX(-50%)">I</span>
<span class="t" style="left:1799.0px;top:644.2px;font:400 27.48px/1 'Liberation Serif', serif;color:#000;transform:translateX(-50%)">J</span>
<span class="t" style="left:1927.0px;top:644.2px;font:400 27.48px/1 'Liberation Serif', serif;color:#000;transform:translateX(-50%)">K</span>
<span class="t" style="left:2055.0px;top:644.2px;font:400 27.48px/1 'Liberation Serif', serif;color:#000;transform:translateX(-50%)">L</span>
<span class="t" style="left:2183.0px;top:644.2px;font:400 27.48px/1 'Liberation Serif', serif;color:#000;transform:translateX(-50%)">M</span>
<span class="t" style="left:2311.0px;top:644.2px;font:400 27.48px/1 'Liberation Serif', serif;color:#000;transform:translateX(-50%)">N</span>
<span class="t" style="left:2439.0px;top:644.2px;font:400 27.48px/1 'Liberation Serif', serif;color:#000;transform:translateX(-50%)">O</span>
<span class="t" style="left:2567.0px;top:644.2px;font:400 27.48px/1 'Liberation Serif', serif;color:#000;transform:translateX(-50%)">P</span>
<span class="t" style="right:2390.7px;top:687.7px;font:400 34.45px/1 'Liberation Sans', sans-serif;color:#000;transform-origin:100% 0">105</span>
<span class="t" style="right:2390.7px;top:731.7px;font:400 34.45px/1 'Liberation Sans', sans-serif;color:#000;transform-origin:100% 0">117</span>
<span class="t" style="right:2390.7px;top:775.7px;font:400 34.45px/1 'Liberation Sans', sans-serif;color:#000;transform-origin:100% 0">112</span>
<span class="t" style="right:2390.7px;top:819.7px;font:400 34.45px/1 'Liberation Sans', sans-serif;color:#000;transform-origin:100% 0">148</span>
<span class="t" style="right:2390.7px;top:863.7px;font:400 34.45px/1 'Liberation Sans', sans-serif;color:#000;transform-origin:100% 0">144</span>
<span class="t" style="right:2390.7px;top:907.7px;font:400 34.45px/1 'Liberation Sans', sans-serif;color:#000;transform-origin:100% 0">106</span>
<span class="t" style="right:2390.7px;top:951.7px;font:400 34.45px/1 'Liberation Sans', sans-serif;color:#000;transform-origin:100% 0">124</span>
<span class="t" style="right:2390.7px;top:995.7px;font:400 34.45px/1 'Liberation Sans', sans-serif;color:#000;transform-origin:100% 0">137</span>
<span class="t" style="right:2390.7px;top:1047.7px;font:400 34.45px/1 'Liberation Sans', sans-serif;color:#000;transform-origin:100% 0">128</span>
<span class="t" style="right:2390.7px;top:1099.7px;font:400 34.45px/1 'Liberation Sans', sans-serif;color:#000;transform-origin:100% 0">133</span>
<span class="t" style="right:2390.7px;top:1151.7px;font:400 34.45px/1 'Liberation Sans', sans-serif;color:#000;transform-origin:100% 0">107</span>
<span class="t" style="right:2390.7px;top:1203.7px;font:400 34.45px/1 'Liberation Sans', sans-serif;color:#000;transform-origin:100% 0">123</span>
<span class="t" style="right:2390.7px;top:1247.7px;font:400 34.45px/1 'Liberation Sans', sans-serif;color:#000;transform-origin:100% 0">108</span>
<span class="t" style="right:2390.7px;top:1299.7px;font:400 34.45px/1 'Liberation Sans', sans-serif;color:#000;transform-origin:100% 0">106</span>
<span class="t" style="right:2390.7px;top:1351.7px;font:400 34.45px/1 'Liberation Sans', sans-serif;color:#000;transform-origin:100% 0">138</span>
<span class="t" style="right:2390.7px;top:1403.7px;font:400 34.45px/1 'Liberation Sans', sans-serif;color:#000;transform-origin:100% 0">121</span>
<span class="t" style="right:2390.7px;top:1455.7px;font:400 34.45px/1 'Liberation Sans', sans-serif;color:#000;transform-origin:100% 0">129</span>
<span class="t" style="right:2390.7px;top:1499.7px;font:400 34.45px/1 'Liberation Sans', sans-serif;color:#000;transform-origin:100% 0">130</span>
<span class="t" style="right:2390.7px;top:1543.7px;font:400 34.45px/1 'Liberation Sans', sans-serif;color:#000;transform-origin:100% 0">102</span>
<span class="t" style="right:2390.7px;top:1585.7px;font:400 34.45px/1 'Liberation Sans', sans-serif;color:#000;transform-origin:100% 0">141</span>
<span class="t" style="right:1560.0px;top:1048.6px;font:400 33.43px/1 'Liberation Sans', sans-serif;color:#000;transform-origin:100% 0">0.9</span>
<span class="t" style="right:1560.0px;top:1100.6px;font:400 33.43px/1 'Liberation Sans', sans-serif;color:#000;transform-origin:100% 0">20</span>
<span class="t" style="right:1560.0px;top:1152.6px;font:400 33.43px/1 'Liberation Sans', sans-serif;color:#000;transform-origin:100% 0">19</span>
<span class="t" style="right:1560.0px;top:1204.6px;font:400 33.43px/1 'Liberation Sans', sans-serif;color:#000;transform-origin:100% 0">0.05</span>
<span class="t" style="left:514.0px;top:688.6px;font:700 33.43px/1 'Liberation Sans', sans-serif;color:#e8302a;transform:scaleX(0.9546);">CONFIDENCE INTERVAL FOR μ WHEN σ IS UNKNOWN</span>
<span class="t" style="left:516.0px;top:794.6px;font:700 33.43px/1 'Liberation Sans', sans-serif;color:#000;transform:scaleX(0.9563);">Given the accompanying sample data, use Excel’s formula options to find the 90% confidence interval for the</span>
<span class="t" style="left:516.0px;top:832.6px;font:700 33.43px/1 'Liberation Sans', sans-serif;color:#000;transform:scaleX(0.9563);">population mean. Assume that the population is normally distributed.</span>
<span class="t" style="left:514.0px;top:952.6px;font:700 33.43px/1 'Liberation Sans', sans-serif;color:#e8302a;transform:scaleX(0.9551);">Complete the following analysis. Do not hard code values in your calculations.</span>
<span class="t" style="left:513.6px;top:1040.1px;font:700 39.69px/1 'Liberation Serif', serif;color:#000;transform:scaleX(0.9423);">Confidence Coefficient</span>
<span class="t" style="left:514.0px;top:1092.1px;font:700 39.69px/1 'Liberation Serif', serif;color:#000;transform:scaleX(0.9498);">Sample Size n</span>
<span class="t" style="left:514.0px;top:1143.7px;font:700 39.69px/1 'Liberation Serif', serif;color:#000;transform:scaleX(0.9920);">df</span>
<span class="t" style="left:514.0px;top:1195.0px;font:700 39.97px/1 'Liberation Sans', sans-serif;color:#000;transform:scaleX(0.9153);">α/2</span>
<span class="t" style="left:513.0px;top:1344.1px;font:700 39.69px/1 'Liberation Serif', serif;color:#000;transform:scaleX(0.9539);">Lower Limit of Confidence Interval</span>
<span class="t" style="left:513.0px;top:1448.1px;font:700 39.69px/1 'Liberation Serif', serif;color:#000;transform:scaleX(0.9534);">Upper Limit of Confidence Interval</span>
<span class="t" style="left:1356.0px;top:1352.6px;font:700 33.43px/1 'Liberation Sans', sans-serif;color:#e8302a;transform:scaleX(0.9569);">Compute the lower limit of the confidence Interval using A1:A20, E10, E11, AND E12.</span>
<span class="t" style="left:1356.0px;top:1456.6px;font:700 33.43px/1 'Liberation Sans', sans-serif;color:#e8302a;transform:scaleX(0.9561);">Compute the upper limit of the confidence Interval using A1:A20, E10, E11, and E12.</span>
</body></html>
